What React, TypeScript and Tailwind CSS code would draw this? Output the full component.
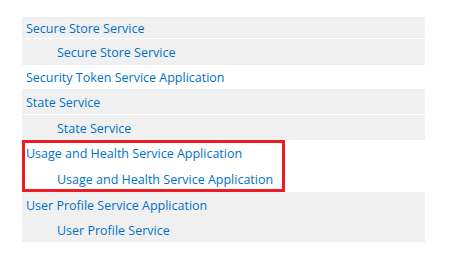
const rows: { label: string; level: number; shade: boolean; h: string; line?: boolean }[] = [
  { label: "Secure Store Service", level: 0, shade: true, h: "h-[22px]", line: true },
  { label: "Secure Store Service", level: 1, shade: true, h: "h-[26px]" },
  { label: "Security Token Service Application", level: 0, shade: false, h: "h-[24px]" },
  { label: "State Service", level: 0, shade: true, h: "h-[26px]", line: true },
  { label: "State Service", level: 1, shade: true, h: "h-[25px]" },
];

const boxed = [
  { label: "Usage and Health Service Application", level: 0 },
  { label: "Usage and Health Service Application", level: 1 },
];

const tail = [
  { label: "User Profile Service Application", level: 0 },
  { label: "User Profile Service", level: 1 },
];

function Row({ label, level, className }: { label: string; level: number; className: string }) {
  return (
    <div className={`flex items-center pt-[3px] ${className}`}>
      <a
        href="#"
        className={`whitespace-nowrap text-[#0072c6] ${level === 1 ? "pl-[35px]" : "pl-[4px]"}`}
      >
        {label}
      </a>
    </div>
  );
}

export default function App() {
  return (
    <div
      className="w-[450px] h-[266px] bg-white pt-[17px] pl-[22px] text-[12.5px] leading-none"
      style={{ fontFamily: '"Open Sans", "Liberation Sans", sans-serif' }}
    >
      <div className="w-[403px] flex flex-col">
        {rows.map((r, i) => (
          <Row
            key={i}
            label={r.label}
            level={r.level}
            className={`${r.h} ${r.shade ? "bg-[#f0f0f0]" : "bg-white"} ${r.line ? "border-b border-white" : ""}`}
          />
        ))}
        <div className="relative">
          {boxed.map((r, i) => (
            <Row key={i} label={r.label} level={r.level} className="h-[26px] bg-white" />
          ))}
          <div className="absolute left-0 top-0 w-[263px] h-full border-[3px] border-[#ed1c24]" />
        </div>
        <div className="bg-[#f0f0f0]">
          {tail.map((r, i) => (
            <Row key={i} label={r.label} level={r.level} className="h-[25px]" />
          ))}
        </div>
      </div>
    </div>
  );
}
